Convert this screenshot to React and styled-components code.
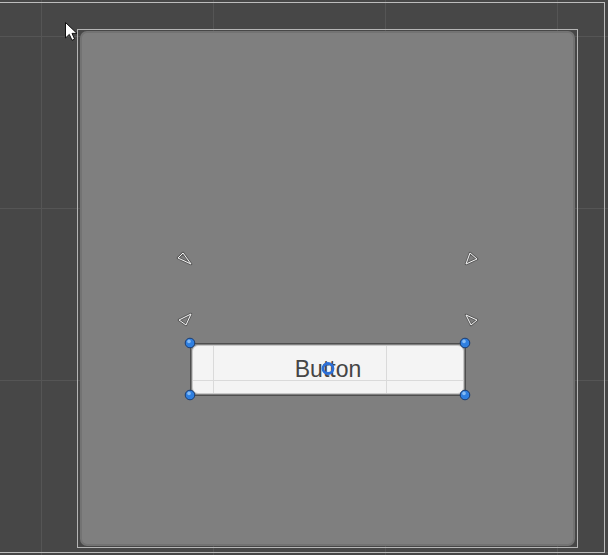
import styled, { createGlobalStyle } from "styled-components";

const GlobalStyle = createGlobalStyle`
  html, body {
    margin: 0;
    padding: 0;
    background: #474747;
  }
  * {
    box-sizing: border-box;
  }
`;

const Viewport = styled.div`
  position: relative;
  width: 608px;
  height: 555px;
  overflow: hidden;
  padding-top: 2px;
  background-color: #474747;
  background-image: linear-gradient(to right, #555555 1px, transparent 1px),
    linear-gradient(to bottom, #555555 1px, transparent 1px);
  background-size: 172px 172px;
  background-position: 41px 36px;
`;

const Frame = styled.div`
  margin-left: -2px;
  width: 607px;
  height: 551px;
  border: 1px solid #bdbdbd;
  border-left: none;
  padding: 26px 0 0 79px;
`;

const CanvasOutline = styled.div`
  display: flex;
  width: 501px;
  height: 519px;
  border: 1px solid #b5b5b5;
  padding: 1px 2px;
`;

const Panel = styled.div`
  flex: 1;
  background: #7f7f7f;
  border: 2px solid #737373;
  border-radius: 7px;
  padding: 310px 0 0 108px;
`;

const SelectionRect = styled.div`
  width: 276px;
  height: 53px;
  border: 1px solid #4e4e4e;
  padding: 1px;
`;

const ButtonBody = styled.div`
  position: relative;
  height: 100%;
  display: flex;
  align-items: center;
  justify-content: center;
  background: #f4f4f4;
  border: 1px solid #c9c9c9;
  border-radius: 6px;
  font-family: "Liberation Sans", Arial, sans-serif;
  font-size: 23px;
  color: #454545;
  padding-bottom: 1px;
`;

const SliceLine = styled.span`
  position: absolute;
  background: #dadada;
  ${(p) =>
    p.$vertical
      ? `top: 0; bottom: 0; width: 1px; left: ${p.$at}px;`
      : `left: 0; right: 0; height: 1px; top: ${p.$at}px;`}
`;

const Gizmos = styled.svg`
  position: absolute;
  left: 0;
  top: 0;
  pointer-events: none;
`;

const anchors = [
  "178,258 183,253 191,264",
  "179,320 191,314 186,325",
  "466,264 470,253 477,259",
  "466,315 477,320 471,325",
];

const handles = [
  [190, 343],
  [465, 343],
  [190, 395],
  [465, 395],
];

export default function App() {
  return (
    <>
      <GlobalStyle />
      <Viewport>
        <Frame>
          <CanvasOutline>
            <Panel>
              <SelectionRect>
                <ButtonBody>
                  <SliceLine $vertical $at={20} />
                  <SliceLine $vertical $at={193} />
                  <SliceLine $at={34} />
                  Button
                </ButtonBody>
              </SelectionRect>
            </Panel>
          </CanvasOutline>
        </Frame>
        <Gizmos width="608" height="555" viewBox="0 0 608 555">
          {anchors.map((pts) => (
            <g key={pts}>
              <polygon points={pts} fill="none" stroke="#5a5a5a" strokeWidth="2.6" strokeLinejoin="round" />
              <polygon points={pts} fill="none" stroke="#f4f4f4" strokeWidth="1" strokeLinejoin="round" />
            </g>
          ))}
          {handles.map(([x, y]) => (
            <g key={`${x}-${y}`}>
              <circle cx={x} cy={y} r="4.8" fill="#2f7fe0" stroke="#1c3d70" strokeWidth="1" />
              <circle cx={x - 1} cy={y - 1.6} r="1.8" fill="#86bbf4" />
            </g>
          ))}
          <circle cx="328" cy="368.5" r="5" fill="none" stroke="#2b6fd8" strokeWidth="2.8" />
          <path
            d="M65.5 22.5 L65.5 38 L69.3 34.4 L72 40.3 L74.6 39.1 L72 33.4 L77 33.4 Z"
            fill="#ffffff"
            stroke="#111111"
            strokeWidth="1"
            strokeLinejoin="round"
          />
        </Gizmos>
      </Viewport>
    </>
  );
}
